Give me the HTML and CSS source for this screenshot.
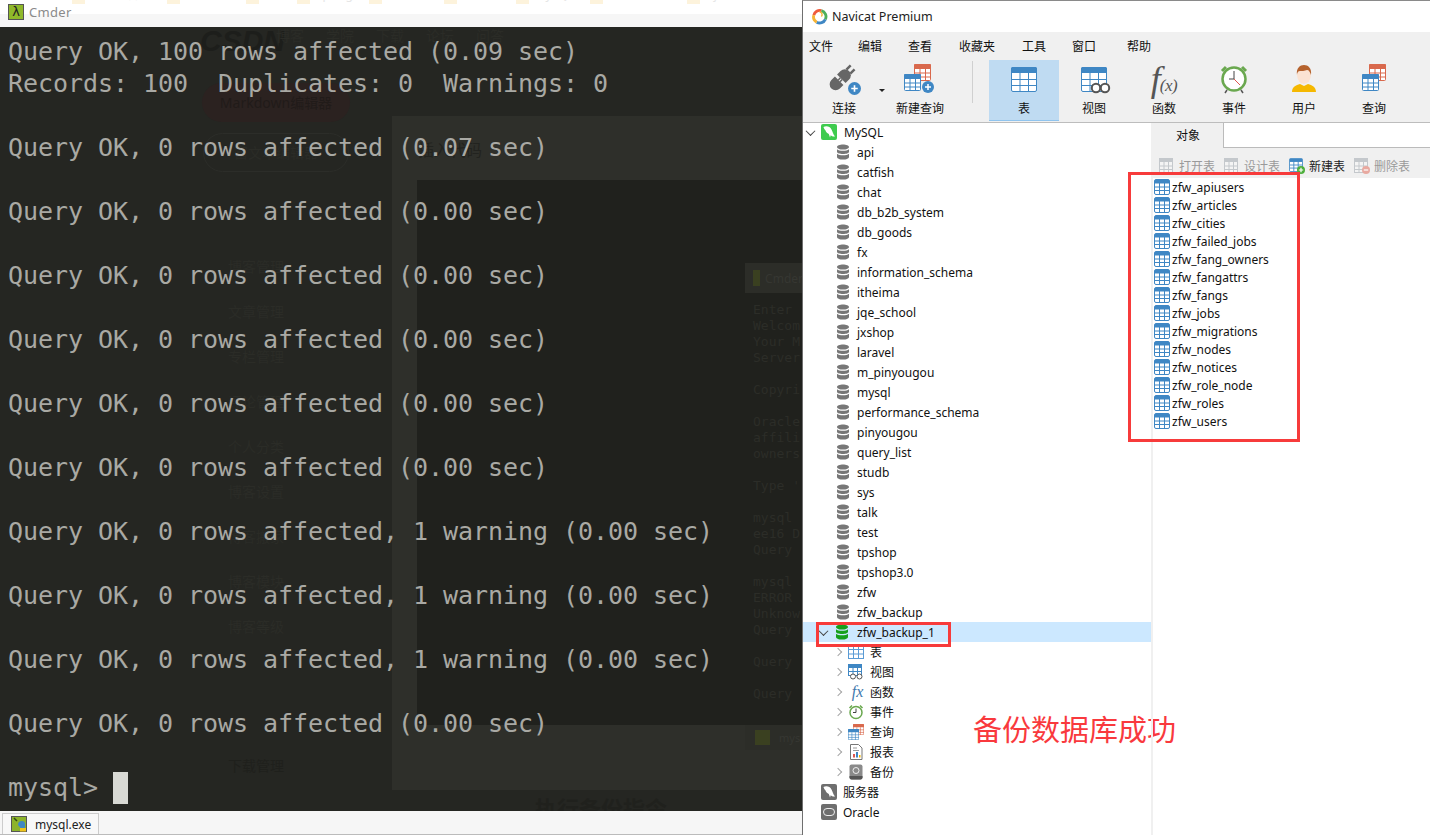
FILE: index.html
```html
<!DOCTYPE html>
<html lang="zh-CN">
<head>
<meta charset="utf-8">
<title>Cmder and Navicat Premium</title>
<link rel="stylesheet" href="styles.css">
</head>
<body>
<svg class="defs" width="0" height="0" aria-hidden="true">
  <defs>
    <symbol id="db" viewBox="0 0 14 16">
      <path fill="currentColor" d="M1 3c0-1.500 2.700-2.600 6-2.600S13 1.500 13 3 10.300 5.600 7 5.600 1 4.500 1 3zM1 5.200c1.200 1 3.400 1.500 6 1.500s4.800-.5 6-1.500V7.800C13 9.200 10.300 10 7 10S1 9.200 1 7.800zM1 9.800c1.200 1 3.400 1.500 6 1.500s4.800-.5 6-1.500V13c0 1.500-2.700 2.600-6 2.600S1 14.500 1 13z"/>
    </symbol>
    <symbol id="tbl" viewBox="0 0 16 16">
      <rect x=".5" y=".5" width="15" height="15" rx="1.500" fill="#fff" stroke="#3f87c4"/>
      <path fill="#3f87c4" d="M1 1h14v3.500H1z"/>
      <path stroke="#3f87c4" fill="none" d="M1 8h14M1 11.500h14M5.500 4v11M10.500 4v11"/>
    </symbol>
    <symbol id="tblbig" viewBox="0 0 26 25">
      <rect x=".5" y=".5" width="25" height="24" rx="1.500" fill="#fff" stroke="#3f87c4"/>
      <path fill="#3f87c4" d="M0 1.500A1.500 1.500 0 0 1 1.500 0h23A1.500 1.500 0 0 1 26 1.500V6H0z"/>
      <path stroke="#3f87c4" fill="none" d="M0 12.500h26M0 18.500h26M9 6v19M17.500 6v19"/>
    </symbol>
    <symbol id="tblred" viewBox="0 0 17 17">
      <rect x=".5" y=".5" width="16" height="16" rx="1" fill="#fff" stroke="#d9694d"/>
      <path fill="#d9694d" d="M0 1a1 1 0 0 1 1-1h15a1 1 0 0 1 1 1v4H0z"/>
      <path stroke="#d9694d" fill="none" d="M0 9h17M0 13h17M6 5v12M11.500 5v12"/>
    </symbol>
    <symbol id="tblblue" viewBox="0 0 17 17">
      <rect x=".5" y=".5" width="16" height="16" rx="1" fill="#fff" stroke="#3f87c4"/>
      <path fill="#3f87c4" d="M0 1a1 1 0 0 1 1-1h15a1 1 0 0 1 1 1v4H0z"/>
      <path stroke="#3f87c4" fill="none" d="M0 9h17M0 13h17M6 5v12M11.500 5v12"/>
    </symbol>
    <symbol id="plus" viewBox="0 0 12 12">
      <circle cx="6" cy="6" r="6" fill="#3f87c4"/>
      <path d="M6 3v6M3 6h6" stroke="#fff" stroke-width="1.500"/>
    </symbol>
    <symbol id="dolphin" viewBox="0 0 16 16">
      <path fill="#fff" d="M2.500 3c3-1.500 6.500-.5 8 2.500 1 2 1.500 4.500 3.500 7-2 .2-3.300-.3-4.300-1.200L9 13.500 7.800 10C6 9.300 5 8 4.400 6.300 3.800 5.500 2.800 4.500 2.500 3z"/>
    </symbol>
    <symbol id="grayt" viewBox="0 0 16 16">
      <rect x=".5" y=".5" width="13" height="14" fill="#f4f4f4" stroke="#c4c8cc"/>
      <path fill="#c4c8cc" d="M1 1h12v3H1z"/>
      <path stroke="#c4c8cc" fill="none" d="M1 8h12M1 11.500h12M5 4v11M9.500 4v11"/>
    </symbol>
  </defs>
</svg>

<section class="cmder">
  <div class="cmder-chrome">
    <div class="bookmarks">
      <span class="first">收藏图库</span><span>视频和音乐</span><span>WeChat</span><span>DK</span><span>Spring</span><span>Swoole</span><span>Oracle</span><span>MySQL</span><span>WebSocket</span><span>Ajax</span>
    </div>
    <div class="cmder-title">
      <span class="lambda">λ</span><span class="cmder-name">Cmder</span>
    </div>
  </div>
  <div class="terminal">
    <div class="ghost-page" aria-hidden="true">
      <div class="ghost-logo">CSDN</div>
      <div class="ghost-nav"><span>博客</span><span>学院</span><span>下载</span><span>论坛</span><span>问答</span></div>
      <div class="ghost-pill">Markdown编辑器</div>
      <div class="ghost-pill2">富文本编辑器</div>
      <div class="ghost-side">
        <span>博客管理</span><span>文章管理</span><span>专栏管理</span><span>评论管理</span><span>个人分类</span><span>博客设置</span><span>博客搬家</span><span>博客模块</span><span>博客等级</span>
      </div>
      <div class="ghost-side ghost-side2"><span>下载管理</span></div>
      <div class="ghost-dialog">
        <div class="ghost-h">插入代码</div>
        <div class="ghost-code"></div>
      </div>
      <div class="ghost-cmd">
        <div class="ghost-cmd-title"><i></i>Cmder</div>
        <pre class="ghost-cmd-text">Enter
Welcom
Your M
Server

Copyri

Oracle
affili
owners

Type '

mysql
ee16 D
Query

mysql
ERROR
Unknow
Query

Query

Query</pre>
        <div class="ghost-cmd-tab"><i></i>mys</div>
      </div>
      <div class="ghost-cap">执行备份指令</div>
    </div>
<pre class="term-text">Query OK, 100 rows affected (0.09 sec)
Records: 100  Duplicates: 0  Warnings: 0

Query OK, 0 rows affected (0.07 sec)

Query OK, 0 rows affected (0.00 sec)

Query OK, 0 rows affected (0.00 sec)

Query OK, 0 rows affected (0.00 sec)

Query OK, 0 rows affected (0.00 sec)

Query OK, 0 rows affected (0.00 sec)

Query OK, 0 rows affected, 1 warning (0.00 sec)

Query OK, 0 rows affected, 1 warning (0.00 sec)

Query OK, 0 rows affected, 1 warning (0.00 sec)

Query OK, 0 rows affected (0.00 sec)

mysql&gt; <span class="cursor"> </span></pre>
  </div>
  <div class="cmder-tabs">
    <div class="cmder-tab">
      <svg class="tab-ico" viewBox="0 0 16 16"><rect width="16" height="16" fill="#8cb32b"/><rect x=".5" y=".5" width="15" height="15" fill="none" stroke="#555"/><path d="M7 9a4 4 0 0 1 4-4c2 0 3 1 3 3v4H9.500z" fill="#3f87c4"/><path d="M9 12h6v3.500H9z" fill="#f0c419"/><path d="M3 2l3 3" stroke="#2e4a12" stroke-width="1.500"/></svg>
      <span>mysql.exe</span>
    </div>
  </div>
</section>

<section class="navicat">
  <header class="nv-title">
    <svg class="nv-logo" viewBox="0 0 18 18" fill="none" stroke-width="3"><path d="M3 7.500A6.500 6.500 0 0 1 11 2.800" stroke="#ef5a3c"/><path d="M11 2.800A6.500 6.500 0 0 1 15.200 12" stroke="#4fb05a"/><path d="M15.200 12A6.500 6.500 0 0 1 6 15" stroke="#3f87c4"/><path d="M6 15A6.500 6.500 0 0 1 3 7.500" stroke="#f5b335"/><path d="M9 4a3 3 0 0 1 2 5" stroke="#f5b335" stroke-width="1.500"/></svg>
    <span>Navicat Premium</span>
  </header>
  <nav class="nv-menu">
    <span>文件</span><span>编辑</span><span>查看</span><span>收藏夹</span><span>工具</span><span>窗口</span><span>帮助</span>
  </nav>
  <div class="nv-toolbar">
    <div class="tool">
      <span class="tool-ico">
        <svg viewBox="0 0 36 36"><g fill="#666" transform="rotate(-45 16 17)"><path d="M3 15h4v4H3z"/><path d="M7 11h5v12H7a6 6 0 0 1 0-12z"/><path d="M15 11h5a6 6 0 0 1 0 12h-5z"/><path d="M25 13h6v2.500h-6zM25 18.500h6V21h-6z"/><path d="M12 15h3v1.500h-3zM12 17.500h3V19h-3z"/></g><use href="#plus" x="22" y="21" width="13" height="13"/></svg>
      </span>
      <span>连接</span>
    </div>
    <span class="caret"></span>
    <div class="tool">
      <span class="tool-ico">
        <svg viewBox="0 0 36 36"><use href="#tblred" x="12" y="3" width="17" height="17"/><use href="#tblblue" x="2" y="13" width="17" height="17"/><use href="#plus" x="20" y="20" width="12" height="12"/></svg>
      </span>
      <span>新建查询</span>
    </div>
    <span class="tool-sep"></span>
    <div class="tool active">
      <span class="tool-ico"><svg viewBox="0 0 36 36"><use href="#tblbig" x="5" y="6" width="26" height="25"/></svg></span>
      <span>表</span>
    </div>
    <div class="tool">
      <span class="tool-ico"><svg viewBox="0 0 36 36"><use href="#tblbig" x="5" y="6" width="26" height="25"/><circle cx="20" cy="27" r="4.200" fill="#fff" stroke="#555" stroke-width="2"/><circle cx="29" cy="27" r="4.200" fill="#fff" stroke="#555" stroke-width="2"/></svg></span>
      <span>视图</span>
    </div>
    <div class="tool">
      <span class="tool-ico fx"><i>f</i><em>(x)</em></span>
      <span>函数</span>
    </div>
    <div class="tool">
      <span class="tool-ico"><svg viewBox="0 0 36 36"><circle cx="18" cy="18" r="11.500" fill="#fff" stroke="#6aa84f" stroke-width="2.500"/><path d="M6 10l4-4M30 10l-4-4" stroke="#6aa84f" stroke-width="3"/><path d="M11 29l-2 3M25 29l2 3" stroke="#555" stroke-width="1.500"/><path d="M18 10v8h-5" stroke="#444" fill="none"/><path d="M18 18l6 6" stroke="#e0574f"/></svg></span>
      <span>事件</span>
    </div>
    <div class="tool">
      <span class="tool-ico"><svg viewBox="0 0 36 36"><path fill="#f5b800" d="M6 31c0-5 4-7 8-8l4 2 4-2c4 1 8 3 8 8z"/><ellipse cx="18" cy="14" rx="7" ry="9" fill="#fbe3d2"/><path fill="#b5622d" d="M11 14c-1-7 3-10 7-10s8 3 7 10c-1-3-2-5-4-5-2 1-6 1-7 1-2 0-3 2-3 4z"/></svg></span>
      <span>用户</span>
    </div>
    <div class="tool">
      <span class="tool-ico"><svg viewBox="0 0 36 36"><use href="#tblred" x="13" y="3" width="17" height="17"/><use href="#tblblue" x="6" y="13" width="17" height="17"/></svg></span>
      <span>查询</span>
    </div>
  </div>

  <div class="nv-body">
    <aside class="tree">
      <div class="row conn"><span class="chev down"></span><svg class="conn-ico green"><use href="#dolphin"/></svg><span>MySQL</span></div>
      <div class="row db"><svg class="db-ico"><use href="#db"/></svg><span>api</span></div>
      <div class="row db"><svg class="db-ico"><use href="#db"/></svg><span>catfish</span></div>
      <div class="row db"><svg class="db-ico"><use href="#db"/></svg><span>chat</span></div>
      <div class="row db"><svg class="db-ico"><use href="#db"/></svg><span>db_b2b_system</span></div>
      <div class="row db"><svg class="db-ico"><use href="#db"/></svg><span>db_goods</span></div>
      <div class="row db"><svg class="db-ico"><use href="#db"/></svg><span>fx</span></div>
      <div class="row db"><svg class="db-ico"><use href="#db"/></svg><span>information_schema</span></div>
      <div class="row db"><svg class="db-ico"><use href="#db"/></svg><span>itheima</span></div>
      <div class="row db"><svg class="db-ico"><use href="#db"/></svg><span>jqe_school</span></div>
      <div class="row db"><svg class="db-ico"><use href="#db"/></svg><span>jxshop</span></div>
      <div class="row db"><svg class="db-ico"><use href="#db"/></svg><span>laravel</span></div>
      <div class="row db"><svg class="db-ico"><use href="#db"/></svg><span>m_pinyougou</span></div>
      <div class="row db"><svg class="db-ico"><use href="#db"/></svg><span>mysql</span></div>
      <div class="row db"><svg class="db-ico"><use href="#db"/></svg><span>performance_schema</span></div>
      <div class="row db"><svg class="db-ico"><use href="#db"/></svg><span>pinyougou</span></div>
      <div class="row db"><svg class="db-ico"><use href="#db"/></svg><span>query_list</span></div>
      <div class="row db"><svg class="db-ico"><use href="#db"/></svg><span>studb</span></div>
      <div class="row db"><svg class="db-ico"><use href="#db"/></svg><span>sys</span></div>
      <div class="row db"><svg class="db-ico"><use href="#db"/></svg><span>talk</span></div>
      <div class="row db"><svg class="db-ico"><use href="#db"/></svg><span>test</span></div>
      <div class="row db"><svg class="db-ico"><use href="#db"/></svg><span>tpshop</span></div>
      <div class="row db"><svg class="db-ico"><use href="#db"/></svg><span>tpshop3.0</span></div>
      <div class="row db"><svg class="db-ico"><use href="#db"/></svg><span>zfw</span></div>
      <div class="row db"><svg class="db-ico"><use href="#db"/></svg><span>zfw_backup</span></div>
      <div class="row selected"><span class="chev down"></span><svg class="db-ico on"><use href="#db"/></svg><span>zfw_backup_1</span></div>
      <div class="row sub"><span class="chev"></span><svg class="sub-ico" viewBox="0 0 16 16"><rect x=".5" y="1.500" width="15" height="13" fill="#fff" stroke="#5a9bd5"/><path d="M1 5.500h14M1 10h14M5.500 2v12M10.500 2v12" stroke="#5a9bd5" fill="none"/></svg><span>表</span></div>
      <div class="row sub"><span class="chev"></span><svg class="sub-ico" viewBox="0 0 16 16"><rect x=".5" y=".5" width="13" height="11" fill="#fff" stroke="#3f87c4"/><path d="M1 1h12v3H1z" fill="#3f87c4"/><path d="M1 7.500h12M5 4v8M9.500 4v8" stroke="#3f87c4" fill="none"/><circle cx="5" cy="12.500" r="2.500" fill="#fff" stroke="#555"/><circle cx="11.500" cy="12.500" r="2.500" fill="#fff" stroke="#555"/></svg><span>视图</span></div>
      <div class="row sub"><span class="chev"></span><span class="sub-fx">fx</span><span>函数</span></div>
      <div class="row sub"><span class="chev"></span><svg class="sub-ico" viewBox="0 0 16 16"><circle cx="8" cy="8.500" r="6" fill="#fff" stroke="#6aa84f" stroke-width="1.500"/><path d="M1.500 4l2.500-2.500M14.500 4L12 1.500" stroke="#6aa84f" stroke-width="1.500"/><path d="M8 4.500v4H5" stroke="#444" fill="none"/></svg><span>事件</span></div>
      <div class="row sub"><span class="chev"></span><svg class="sub-ico" viewBox="0 0 16 16"><use href="#tblred" x="5" y="0" width="11" height="11"/><use href="#tblblue" x="0" y="5" width="11" height="11"/></svg><span>查询</span></div>
      <div class="row sub"><span class="chev"></span><svg class="sub-ico" viewBox="0 0 16 16"><path d="M2.500.5h8l3.500 3.500v11.500h-11.500z" fill="#fff" stroke="#777"/><path d="M5 4h4M5 6.500h6" stroke="#999"/><path d="M5 10h2v3.500H5z" fill="#e0574f"/><path d="M8 8h2v5.500H8z" fill="#3f87c4"/><path d="M11 11h1.500v2.500H11z" fill="#f5b800"/></svg><span>报表</span></div>
      <div class="row sub"><span class="chev"></span><svg class="sub-ico" viewBox="0 0 16 16"><rect x="1.500" y=".5" width="13" height="15" rx="2" fill="#8a8a8a"/><path d="M1.500 12h13v1.500a2 2 0 0 1-2 2h-9a2 2 0 0 1-2-2z" fill="#555"/><circle cx="8" cy="6.500" r="3" fill="none" stroke="#eee"/></svg><span>备份</span></div>
      <div class="row conn2"><svg class="conn-ico gray"><use href="#dolphin"/></svg><span>服务器</span></div>
      <div class="row conn2"><span class="conn-ico gray oracle"><i></i></span><span>Oracle</span></div>
      <div class="success-note">备份数据库成功</div>
      <div class="redbox redbox-db"></div>
    </aside>
    <main class="objects">
      <div class="tabs"><span class="tab">对象</span><span class="tab-rest"></span></div>
      <div class="obj-tools">
        <span class="obj-btn off"><svg><use href="#grayt"/></svg>打开表</span>
        <span class="obj-btn off"><svg><use href="#grayt"/></svg>设计表</span>
        <span class="obj-btn"><svg viewBox="0 0 16 16"><use href="#tbl" width="14" height="14"/><circle cx="12" cy="12" r="4" fill="#4cae3a"/><path d="M12 9.800v4.400M9.800 12h4.400" stroke="#fff" stroke-width="1.200"/></svg>新建表</span>
        <span class="obj-btn off"><svg viewBox="0 0 16 16"><use href="#grayt"/><circle cx="12" cy="12" r="4" fill="#e8a9a0"/><path d="M9.800 12h4.400" stroke="#fff" stroke-width="1.200"/></svg>删除表</span>
      </div>
      <ul class="obj-list">
        <li><svg><use href="#tbl"/></svg>zfw_apiusers</li>
        <li><svg><use href="#tbl"/></svg>zfw_articles</li>
        <li><svg><use href="#tbl"/></svg>zfw_cities</li>
        <li><svg><use href="#tbl"/></svg>zfw_failed_jobs</li>
        <li><svg><use href="#tbl"/></svg>zfw_fang_owners</li>
        <li><svg><use href="#tbl"/></svg>zfw_fangattrs</li>
        <li><svg><use href="#tbl"/></svg>zfw_fangs</li>
        <li><svg><use href="#tbl"/></svg>zfw_jobs</li>
        <li><svg><use href="#tbl"/></svg>zfw_migrations</li>
        <li><svg><use href="#tbl"/></svg>zfw_nodes</li>
        <li><svg><use href="#tbl"/></svg>zfw_notices</li>
        <li><svg><use href="#tbl"/></svg>zfw_role_node</li>
        <li><svg><use href="#tbl"/></svg>zfw_roles</li>
        <li><svg><use href="#tbl"/></svg>zfw_users</li>
      </ul>
      <div class="redbox redbox-list"></div>
    </main>
  </div>
</section>
</body>
</html>
```
FILE: styles.css
```css
* { box-sizing: border-box; }
html, body { margin: 0; height: 100%; overflow: hidden; background: #fff; }
body {
  position: relative;
  width: 1430px;
  height: 835px;
  font-family: "Noto Sans", "Noto Sans CJK SC", sans-serif;
  font-size: 12px;
  color: #111;
}
.defs { position: absolute; }

/* Cmder window */
.cmder {
  position: absolute;
  left: 0; top: 0;
  width: 803px;
  height: 835px;
  display: flex;
  flex-direction: column;
  background: #f6f6f6;
}
.cmder-chrome {
  position: relative;
  height: 27px;
  background: linear-gradient(#fff 0 14px, #f6f6f6 14px);
  overflow: hidden;
}
.bookmarks {
  position: absolute;
  left: 0; top: -14px;
  display: flex;
  gap: 16px;
  font-size: 12px;
  line-height: 18px;
  color: #e6e6e6;
  white-space: nowrap;
}
.bookmarks span { display: flex; gap: 6px; }
.bookmarks span::before { content: ""; width: 13px; height: 18px; background: #fdf3dc; }
.bookmarks .first { margin-right: 8px; }
.bookmarks .first::before { width: 0; margin-right: -6px; }
.cmder-title {
  position: absolute;
  inset: 0;
  display: flex;
  align-items: center;
  gap: 5px;
  padding: 0 0 3px 8px;
}
.lambda {
  width: 16px; height: 16px;
  background: #8fb82a;
  border: 1px solid #555;
  color: #222;
  font: 13px/14px "DejaVu Sans", sans-serif;
  text-align: center;
}
.cmder-name { font-size: 13px; color: #8a8a8a; letter-spacing: .3px; }

.terminal {
  position: relative;
  flex: none;
  height: 784px;
  background: #252622;
  overflow: hidden;
}
.term-text {
  position: relative;
  margin: 0;
  padding: 9px 0 0 8px;
  font: 25px/32px "DejaVu Sans Mono", monospace;
  letter-spacing: -.05px;
  color: #a9a9a4;
}
.cursor {
  display: inline-block;
  width: 15px;
  height: 32px;
  vertical-align: top;
  background: #d8d9d4;
}

/* faint page behind the semi-transparent terminal */
.ghost-page { position: absolute; inset: 0; color: #2b2c27; white-space: nowrap; }
.ghost-logo {
  position: absolute; left: 200px; top: -6px;
  font: italic 700 30px/40px "Liberation Sans", sans-serif;
  color: #1d1e1b;
}
.ghost-nav { position: absolute; left: 276px; top: -1px; display: flex; gap: 22px; font-size: 14px; line-height: 20px; }
.ghost-pill {
  position: absolute; left: 202px; top: 56px;
  width: 148px; height: 39px;
  border-radius: 20px;
  background: #2b2220;
  color: #211b19;
  font-size: 14px;
  line-height: 39px;
  text-align: center;
}
.ghost-pill2 {
  position: absolute; left: 203px; top: 106px;
  width: 146px; height: 39px;
  border-radius: 20px;
  border: 1px solid #2c2d29;
  font-size: 14px;
  line-height: 37px;
  text-align: center;
}
.ghost-side {
  position: absolute; left: 228px; top: 230px;
  display: flex; flex-direction: column; gap: 25px;
  font-size: 14px; line-height: 20px;
}
.ghost-side2 { top: 729px; color: #1f201c; }
.ghost-dialog {
  position: absolute; left: 392px; top: 89px;
  width: 411px; height: 674px;
  background: #2e2f2a;
}
.ghost-h { position: absolute; left: 26px; top: 22px; font-size: 16px; line-height: 24px; color: #22231f; }
.ghost-code {
  position: absolute; left: 25px; top: 64px;
  width: 386px; height: 545px;
  background: #20211d;
}
.ghost-cmd { position: absolute; left: 745px; top: 236px; width: 58px; height: 490px; }
.ghost-cmd-title {
  height: 30px;
  background: #2c2d28;
  padding: 0 0 0 8px;
  display: flex; align-items: center; gap: 5px;
  font-size: 12px;
  color: #363732;
}
.ghost-cmd-title i { width: 16px; height: 16px; background: #3a4020; }
.ghost-cmd-text {
  margin: 0;
  padding: 9px 0 0 8px;
  height: 432px;
  overflow: hidden;
  font: 13px/16px "DejaVu Sans Mono", monospace;
  color: #2c2d28;
}
.ghost-cmd-tab {
  position: absolute; left: 0; top: 462px;
  width: 58px; height: 25px;
  background: #2c2d28;
  padding-left: 10px;
  display: flex; align-items: center; gap: 9px;
  font-size: 11px;
  color: #363732;
  overflow: hidden;
}
.ghost-cmd-tab i { flex: none; width: 15px; height: 15px; background: #3a4020; }
.ghost-cap {
  position: absolute; left: 535px; top: 767px;
  font-size: 22px; line-height: 28px; font-weight: 700;
  color: #20211d;
}
.cmder-tabs { height: 24px; padding: 2px 0 0 2px; position: relative; border-bottom: 1px solid #bbb; }
.cmder-tab {
  width: 97px; height: 21px;
  border: 1px solid #ccc;
  border-bottom: 0;
  background: #f8f8f8;
  display: flex; align-items: center; gap: 8px;
  padding-left: 8px;
  font-size: 12px;
  color: #222;
}
.tab-ico { width: 16px; height: 16px; }

/* Navicat window */
.navicat {
  position: absolute;
  left: 802px; top: 0;
  width: 628px;
  height: 835px;
  background: #fff;
  border-left: 1px solid #6f6f6f;
  border-top: 1px solid #8a8a8a;
  display: flex;
  flex-direction: column;
}
.nv-title {
  height: 31px;
  display: flex; align-items: center; gap: 4px;
  padding-left: 8px;
  font-size: 12.500px;
  color: #222;
}
.nv-logo { width: 17px; height: 17px; }
.nv-menu {
  height: 28px;
  background: #f0f0f0;
  display: grid;
  grid-template-columns: 49px 50px 51px 63px 50px 55px auto;
  align-items: center;
  padding-left: 6px;
  font-size: 12px;
}
.nv-toolbar {
  flex: none;
  height: 63px;
  background: #f0f0f0;
  border-bottom: 1px solid #bdbdbd;
  display: flex;
  padding-left: 6px;
}
.tool {
  flex: none;
  width: 70px;
  height: 61px;
  display: flex; flex-direction: column; align-items: center;
  font-size: 12px;
  line-height: 20px;
}
.tool.active { background: #bfdbf2; border-bottom: 1px solid #90c4ee; }
.tool-ico { height: 39px; padding-top: 1px; display: block; }
.tool-ico svg { width: 36px; height: 36px; display: block; }
.tool-ico.fx { font-family: "Liberation Serif", serif; color: #555; display: flex; align-items: baseline; }
.fx i { font-size: 36px; line-height: 36px; }
.fx em { font-size: 17px; margin-left: -1px; letter-spacing: -.5px; }
.caret {
  flex: none;
  width: 6px; height: 0;
  margin-top: 29px;
  border: 3px solid transparent;
  border-top: 3px solid #222;
  border-bottom: 0;
}
.tool-sep { flex: none; width: 1px; height: 42px; margin: 1px 16px 0 17px; background: #d0d0d0; }

.nv-body { position: relative; flex: 1; display: flex; min-height: 0; }
.tree {
  flex: none;
  width: 348px;
  margin-top: -1px;
  position: relative;
  font-size: 12px;
}
.row {
  position: relative;
  height: 20px;
  display: flex; align-items: center;
  white-space: nowrap;
  padding-left: 1px;
}
.row.db { padding-left: 33px; }
.row.selected { background: #cce8ff; padding-left: 14px; }
.row.sub { padding-left: 29px; }
.row.conn2 { padding-left: 18px; }
.chev {
  flex: none;
  width: 6px; height: 6px;
  margin: 0 4px 0 3px;
  border-right: 1.500px solid #a6a6a6;
  border-bottom: 1.500px solid #a6a6a6;
  transform: rotate(-45deg);
}
.chev.down { width: 7px; height: 7px; margin: 0 3px; border-color: #444; transform: rotate(45deg) translate(-1px, -1px); }
.db-ico { flex: none; width: 14px; height: 16px; margin-right: 7px; color: #777; }
.db-ico.on { color: #16a01c; margin: 0 8px 0 5px; }
.conn-ico { flex: none; width: 16px; height: 16px; margin: 0 7px 0 4px; border-radius: 2px; }
.conn-ico.green { background: #3ecb4e; }
.conn-ico.gray { background: #6e6e6e; margin-left: 0; }
.conn2 .conn-ico { margin-right: 6px; }
.oracle { display: flex; align-items: center; justify-content: center; }
.oracle i { width: 12px; height: 8px; border: 1.500px solid #eee; border-radius: 4px; }
.sub-ico { flex: none; width: 16px; height: 16px; margin: 0 6px 0 3px; }
.sub-fx {
  flex: none;
  width: 19px;
  margin: 0 3px 0 3px;
  text-align: center;
  font: italic 16px/18px "Liberation Serif", serif;
  color: #3f78ad;
}
.success-note {
  position: absolute;
  left: 170px; top: 590px;
  font-size: 29px;
  line-height: 36px;
  color: #f9393d;
  white-space: nowrap;
}
.redbox { position: absolute; border: 3px solid #f73b3b; pointer-events: none; }
.redbox-db { left: 13px; top: 500px; width: 135px; height: 25px; }
.redbox-list { left: -23px; top: 49px; width: 172px; height: 270px; }

.objects {
  position: relative;
  flex: 1;
  display: flex; flex-direction: column;
  min-width: 0;
  font-size: 12px;
}
.tabs { height: 25px; display: flex; }
.tab {
  width: 73px;
  background: #f0f0f0;
  padding-left: 2px;
  text-align: center;
  line-height: 25px;
  border-right: 1px solid #bbb;
}
.tab-rest { flex: 1; border-bottom: 1px solid #bbb; }
.obj-tools {
  height: 30px;
  background: #f0f0f0;
  display: flex; align-items: center;
  padding: 6px 0 0 8px;
}
.obj-btn { width: 65px; display: flex; align-items: center; gap: 4px; white-space: nowrap; color: #222; }
.obj-btn.off { color: #9a9a9a; }
.obj-btn svg { width: 16px; height: 16px; flex: none; }
.obj-list {
  list-style: none;
  margin: 0;
  flex: 1;
  padding: 0 0 0 3px;
  border-left: 2px solid #f0f0f0;
}
.obj-list li {
  height: 18px;
  display: flex; align-items: center;
  gap: 2px;
  white-space: nowrap;
}
.obj-list li svg { width: 16px; height: 16px; flex: none; margin-left: -2px; }
```
